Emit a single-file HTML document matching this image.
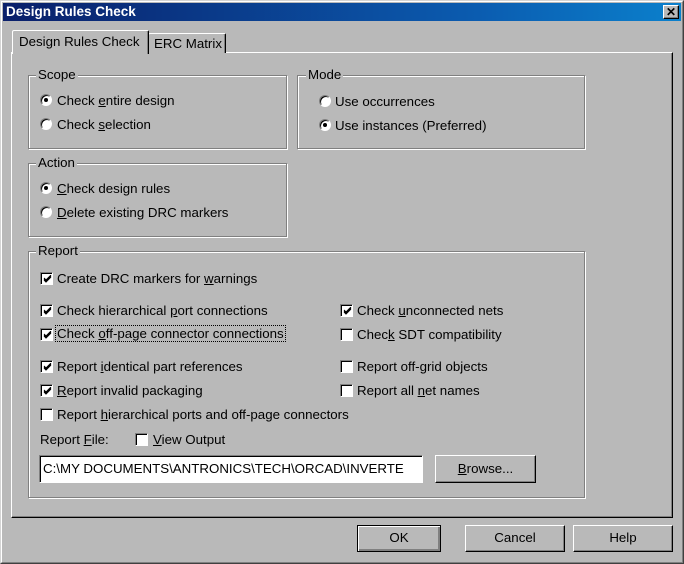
<!DOCTYPE html>
<html><head><meta charset="utf-8"><style>
*{box-sizing:border-box}
body{margin:0;width:684px;height:564px;background:#b9b9b9;font-family:"Liberation Sans",sans-serif;font-size:13.3px;color:#000;position:relative;overflow:hidden}
.a{position:absolute}
.win{left:0;top:0;width:684px;height:564px;border-top:1px solid #d4d4d4;border-left:1px solid #d4d4d4;border-right:1px solid #404040;border-bottom:1px solid #404040}
.win2{left:1px;top:1px;width:682px;height:562px;border-top:1px solid #fff;border-left:1px solid #fff;border-right:1px solid #808080;border-bottom:1px solid #808080}
.title{left:3px;top:3px;width:678px;height:18px;background:linear-gradient(90deg,#0a1f6a,#0b5cb0 70%,#0b80cc);color:#fff;font-weight:bold;font-size:13.5px;line-height:18px;padding-left:3px}
.close{left:663px;top:5px;width:16px;height:14px;background:#b9b9b9;border-top:1px solid #fff;border-left:1px solid #fff;border-right:1px solid #000;border-bottom:1px solid #000;box-shadow:inset -1px -1px #808080;font-size:12px;line-height:12px;text-align:center;font-weight:bold}
.panel{left:11px;top:52px;width:662px;height:466px;border-top:1px solid #fff;border-left:1px solid #fff;border-right:1px solid #000;border-bottom:1px solid #000;box-shadow:inset -1px -1px #808080}
.tab{border-top:1px solid #fff;border-left:1px solid #fff;border-right:1px solid #000;border-radius:2px 2px 0 0;box-shadow:inset -1px 0 #808080;background:#b9b9b9;padding-left:6px}
.grp{border:1px solid #808080;box-shadow:1px 1px 0 #fff, inset 1px 1px 0 #fff}
.lbl{background:#b9b9b9;padding:0 2px;line-height:14px}
.t{line-height:15px;white-space:nowrap}
.cb{width:13px;height:13px;background:#fff;border-top:1px solid #808080;border-left:1px solid #808080;border-right:1px solid #fff;border-bottom:1px solid #fff;box-shadow:inset 1px 1px #000}
.cb svg{position:absolute;left:2px;top:2px}
.rd{width:12px;height:12px;border-radius:50%;background:#fff;border:1px solid #808080;box-shadow:inset 1px 1px #000;border-right-color:#fff;border-bottom-color:#fff}
.rd.on::after{content:"";position:absolute;left:3px;top:3px;width:4px;height:4px;border-radius:50%;background:#000}
.btn{background:#b9b9b9;border-top:1px solid #fff;border-left:1px solid #fff;border-right:1px solid #000;border-bottom:1px solid #000;box-shadow:inset -1px -1px #808080;text-align:center}
u{text-decoration:underline}
</style></head><body>
<div class="a win"></div><div class="a win2"></div>
<div class="a title">Design Rules Check</div>
<div class="a close">✕</div>
<div class="a panel"></div>
<div class="a tab" style="left:148px;top:33px;width:78px;height:20px;line-height:19px;padding-left:5px">ERC Matrix</div>
<div class="a tab" style="left:12px;top:30px;width:137px;height:24px;line-height:22px;border-bottom:none">Design Rules Check</div>

<div class="a grp" style="left:28px;top:75px;width:259px;height:74px"></div>
<div class="a lbl" style="left:36px;top:68px">Scope</div>
<div class="a rd on" style="left:40px;top:94px"></div><div class="a t" style="left:57px;top:93px">Check <u>e</u>ntire design</div>
<div class="a rd" style="left:40px;top:118px"></div><div class="a t" style="left:57px;top:117px">Check <u>s</u>election</div>

<div class="a grp" style="left:297px;top:75px;width:288px;height:74px"></div>
<div class="a lbl" style="left:306px;top:68px">Mode</div>
<div class="a rd" style="left:319px;top:95px"></div><div class="a t" style="left:335px;top:94px">Use occurrences</div>
<div class="a rd on" style="left:319px;top:119px"></div><div class="a t" style="left:335px;top:118px">Use instances (Preferred)</div>

<div class="a grp" style="left:28px;top:163px;width:259px;height:74px"></div>
<div class="a lbl" style="left:36px;top:156px">Action</div>
<div class="a rd on" style="left:40px;top:182px"></div><div class="a t" style="left:57px;top:181px"><u>C</u>heck design rules</div>
<div class="a rd" style="left:40px;top:206px"></div><div class="a t" style="left:57px;top:205px"><u>D</u>elete existing DRC markers</div>

<div class="a grp" style="left:28px;top:251px;width:557px;height:247px"></div>
<div class="a lbl" style="left:36px;top:244px">Report</div>

<div class="a cb" style="left:40px;top:272px"><svg width="9" height="9"><path d="M1 3l2 2l5-5M1 4l2 2l5-5M1 5l2 2l5-5" stroke="#000" fill="none"/></svg></div><div class="a t" style="left:57px;top:271px">Create DRC markers for <u>w</u>arnings</div>
<div class="a cb" style="left:40px;top:304px"><svg width="9" height="9"><path d="M1 3l2 2l5-5M1 4l2 2l5-5M1 5l2 2l5-5" stroke="#000" fill="none"/></svg></div><div class="a t" style="left:57px;top:303px">Check hierarchical <u>p</u>ort connections</div>
<div class="a cb" style="left:40px;top:328px"><svg width="9" height="9"><path d="M1 3l2 2l5-5M1 4l2 2l5-5M1 5l2 2l5-5" stroke="#000" fill="none"/></svg></div><div class="a t" style="left:56px;top:326px;outline:1px dotted #000;padding:0 1px">Check <u>o</u>ff-page connector connections</div>
<div class="a cb" style="left:40px;top:360px"><svg width="9" height="9"><path d="M1 3l2 2l5-5M1 4l2 2l5-5M1 5l2 2l5-5" stroke="#000" fill="none"/></svg></div><div class="a t" style="left:57px;top:359px">Report <u>i</u>dentical part references</div>
<div class="a cb" style="left:40px;top:384px"><svg width="9" height="9"><path d="M1 3l2 2l5-5M1 4l2 2l5-5M1 5l2 2l5-5" stroke="#000" fill="none"/></svg></div><div class="a t" style="left:57px;top:383px"><u>R</u>eport invalid packaging</div>
<div class="a cb" style="left:40px;top:408px"></div><div class="a t" style="left:57px;top:407px">Report <u>h</u>ierarchical ports and off-page connectors</div>

<div class="a cb" style="left:340px;top:304px"><svg width="9" height="9"><path d="M1 3l2 2l5-5M1 4l2 2l5-5M1 5l2 2l5-5" stroke="#000" fill="none"/></svg></div><div class="a t" style="left:357px;top:303px">Check <u>u</u>nconnected nets</div>
<div class="a cb" style="left:340px;top:328px"></div><div class="a t" style="left:357px;top:327px">Chec<u>k</u> SDT compatibility</div>
<div class="a cb" style="left:340px;top:360px"></div><div class="a t" style="left:357px;top:359px">Report off-<u>g</u>rid objects</div>
<div class="a cb" style="left:340px;top:384px"></div><div class="a t" style="left:357px;top:383px">Report all <u>n</u>et names</div>

<div class="a t" style="left:40px;top:432px">Report <u>F</u>ile:</div>
<div class="a cb" style="left:135px;top:433px"></div><div class="a t" style="left:153px;top:432px"><u>V</u>iew Output</div>

<div class="a" style="left:39px;top:455px;width:384px;height:28px;background:#fff;border-top:1px solid #808080;border-left:1px solid #808080;border-right:1px solid #fff;border-bottom:1px solid #fff;box-shadow:inset 1px 1px #000;padding:4px 0 0 3px;line-height:17px;white-space:nowrap;overflow:hidden">C:\MY DOCUMENTS\ANTRONICS\TECH\ORCAD\INVERTE</div>
<div class="a btn" style="left:435px;top:455px;width:101px;height:28px;line-height:25px"><u>B</u>rowse...</div>

<div class="a btn" style="left:357px;top:525px;width:84px;height:27px;line-height:24px;border:1px solid #000;box-shadow:inset 1px 1px #fff,inset -2px -2px #808080">OK</div>
<div class="a btn" style="left:465px;top:525px;width:100px;height:27px;line-height:24px">Cancel</div>
<div class="a btn" style="left:573px;top:525px;width:100px;height:27px;line-height:24px">Help</div>
</body></html>
